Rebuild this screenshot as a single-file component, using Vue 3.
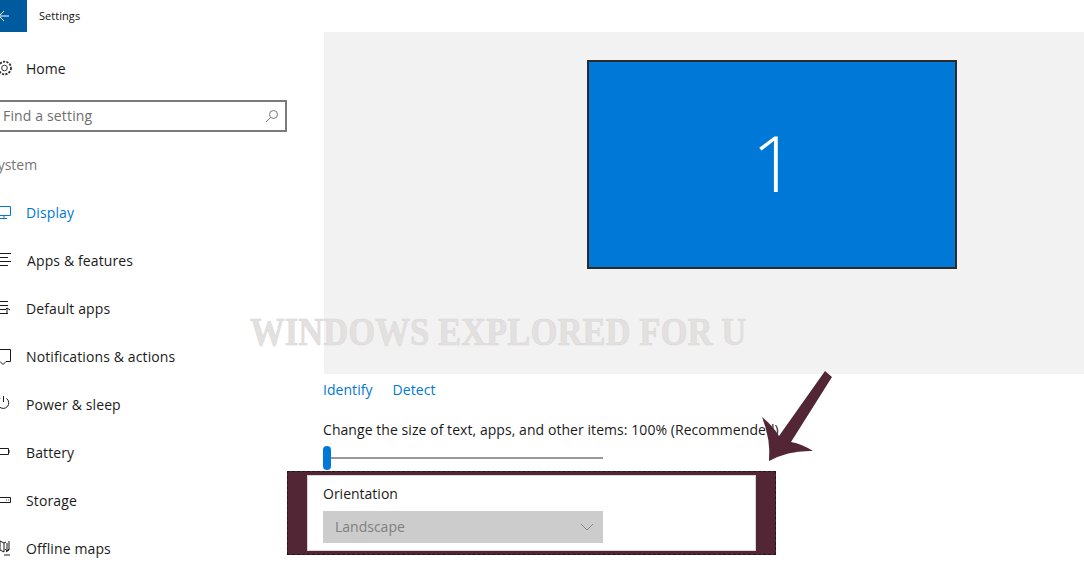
<script setup>
const items = [
  { label: 'Display', active: true, d: 'M-3 6.5H10.5V15.5H-3M4 15.5V18M0 18.5H7' },
  { label: 'Apps & features', shift: true, d: 'M0 5.5H11M0 9.5H8M0 13.5H11M0 17.5H8' },
  { label: 'Default apps', d: 'M0 5.5H8M0 9.5H8M0 13.5H5M0 17.5H8M7 17.5V12M5 14L7 12L10 14' },
  { label: 'Notifications & actions', d: 'M-2 5.5H10.5V17.5H6L3 20.5L0 17.5H-2' },
  { label: 'Power & sleep', d: 'M3.5 4V10M6.5 6.5A5.5 5.5 0 1 1 0 6.5' },
  { label: 'Battery', d: 'M-2 8.5H8.5V14.5H-2M9 10V13' },
  { label: 'Storage', d: 'M-2 9.5H10.5V14.5H-2M6 12H6.8M8 12H8.8' },
  { label: 'Offline maps', d: 'M0 5L4 7V16L0 14ZM4 7L6 6M9 5V14L6 16M7 7V15M5 13L7 15L9 13M4 19H10' },
]
</script>

<template>
  <div class="page">
    <header class="titlebar">
      <div class="back">
        <svg width="27" height="32" viewBox="0 0 27 32" fill="none" stroke="#fff" stroke-width="1">
          <path d="M-1 16H9M4 11L-1 16L4 21" />
        </svg>
      </div>
      <span class="title">Settings</span>
    </header>

    <div class="body">
      <aside class="sidebar">
        <div class="home">
          <svg class="gear" width="26" height="24" viewBox="0 0 26 24" fill="none" stroke="#333" stroke-width="1">
            <circle cx="4.5" cy="12" r="2.8" />
            <path stroke-dasharray="2.2 1.2" stroke-width="1.8" d="M11 12A6.3 6.3 0 1 1 -1.6 12A6.3 6.3 0 1 1 11 12Z" />
          </svg>
          <span>Home</span>
        </div>
        <div class="search">
          <span class="search-text">Find a setting</span>
          <svg width="14" height="14" viewBox="0 0 14 14" fill="none" stroke="#767676" stroke-width="1">
            <circle cx="8.5" cy="5.5" r="4" />
            <path d="M5.5 8.5L1 13" />
          </svg>
        </div>
        <div class="group">System</div>
        <nav class="nav">
          <div v-for="item in items" :key="item.label" class="nav-item" :class="{ active: item.active, shift: item.shift }">
            <svg class="nav-icon" width="26" height="24" viewBox="0 0 26 24" fill="none" stroke="currentColor" stroke-width="1">
              <path :d="item.d" />
            </svg>
            <span>{{ item.label }}</span>
          </div>
        </nav>
      </aside>

      <main class="main">
        <section class="preview">
          <div class="monitor">1</div>
        </section>
        <div class="links">
          <a>Identify</a>
          <a>Detect</a>
        </div>
        <p class="size-label">Change the size of text, apps, and other items: 100% (Recommended)</p>
        <div class="slider">
          <span class="thumb"></span>
          <span class="track"></span>
        </div>
        <section class="orient">
          <div class="orient-inner">
            <div class="orient-label">Orientation</div>
            <div class="select">
              <span class="select-text">Landscape</span>
              <svg width="14" height="8" viewBox="0 0 14 8" fill="none" stroke="#8a8a8a" stroke-width="1">
                <path d="M1 1L7 7L13 1" />
              </svg>
            </div>
          </div>
        </section>
      </main>
    </div>

    <div class="watermark">WINDOWS EXPLORED FOR U</div>
    <svg class="arrow" width="1084" height="569" viewBox="0 0 1084 569">
      <path d="M825 371L832 377L791 442Q802 444 813 451Q789 450 769 461Q771 440 762 417Q773 426 779 436Z" fill="#532635" />
    </svg>
  </div>
</template>

<style>
html, body { margin: 0; background: #fff; }
</style>

<style scoped>
.page {
  position: relative;
  width: 1084px;
  height: 569px;
  overflow: hidden;
  background: #fff;
  color: #1a1a1a;
  font-family: "Open Sans", "Noto Sans", sans-serif;
  font-size: 14px;
}
.titlebar { display: flex; align-items: center; height: 32px; }
.back { width: 27px; height: 32px; background: #005a9e; }
.back svg { display: block; }
.title { margin: 0 0 2px 12px; font-size: 11px; letter-spacing: 0.05px; color: #111; }
.body { display: grid; grid-template-columns: 323px 761px; }
.sidebar { display: flex; flex-direction: column; }
.home { display: flex; align-items: center; height: 48px; margin-top: 12px; }
.gear { flex: none; }
.search {
  display: flex;
  align-items: center;
  justify-content: space-between;
  box-sizing: border-box;
  width: 297px;
  height: 32px;
  margin: 8px 0 0 -10px;
  padding: 0 6px 0 11px;
  border: 2px solid #7a7a7a;
  background: #fff;
}
.search-text { margin-bottom: 2px; letter-spacing: 0.15px; color: #6e6e6e; }
.group { height: 20px; line-height: 20px; margin: 23px 0 0 -10px; color: #767676; }
.nav { display: flex; flex-direction: column; margin-top: 13px; }
.nav-item { display: flex; align-items: center; height: 48px; letter-spacing: 0.12px; color: #1a1a1a; }
.nav-item.shift span { margin-left: 1px; }
.nav-item.active { color: #0078d7; }
.nav-icon { flex: none; }
.main { display: flex; flex-direction: column; }
.preview { height: 342px; margin-left: 1px; padding: 28px 0 0 263px; box-sizing: border-box; background: #f2f2f2; }
.monitor {
  display: flex;
  align-items: center;
  justify-content: center;
  box-sizing: border-box;
  width: 370px;
  height: 209px;
  padding: 0 0 6px 4px;
  border: 2px solid #2b2b2b;
  background: #0078d7;
  color: #fff;
  font-size: 78px;
  font-weight: 300;
}
.links { display: flex; gap: 20px; align-items: center; box-sizing: border-box; height: 32px; padding-bottom: 2px; letter-spacing: 0.05px; color: #0078d7; }
.size-label { height: 20px; line-height: 20px; margin: 14px 0 0; letter-spacing: 0.06px; white-space: nowrap; }
.slider { position: relative; display: flex; align-items: center; width: 280px; height: 24px; margin-top: 6px; }
.thumb { width: 8px; height: 24px; border-radius: 4px; background: #0078d7; flex: none; }
.track { flex: 1; height: 2px; background: #999; }
.orient {
  box-sizing: border-box;
  width: 489px;
  margin: 1px 0 0 -36px;
  border: solid #532635;
  border-width: 4px 20px;
  outline: 1px dashed #2b131d;
  outline-offset: -1px;
}
.orient-inner { padding: 9px 16px 8px; background: #fff; box-shadow: inset 0 0 0 1px #d9d4d6; }
.orient-label { height: 20px; line-height: 20px; color: #1a1a1a; }
.select {
  display: flex;
  align-items: center;
  justify-content: space-between;
  box-sizing: border-box;
  width: 280px;
  height: 32px;
  margin-top: 7px;
  padding: 0 9px 0 12px;
  background: #cccccc;
  color: #7f7f7f;
}
.select-text { margin-bottom: 2px; }
.watermark {
  position: absolute;
  left: 250px;
  top: 308px;
  font-family: "Liberation Serif", serif;
  font-size: 41px;
  font-weight: 700;
  line-height: 46px;
  white-space: nowrap;
  color: #e3e0e0;
  -webkit-text-stroke: 0.5px #dad6d6;
  transform: scaleX(0.846);
  transform-origin: left center;
}
.arrow { position: absolute; left: 0; top: 0; pointer-events: none; }
</style>
